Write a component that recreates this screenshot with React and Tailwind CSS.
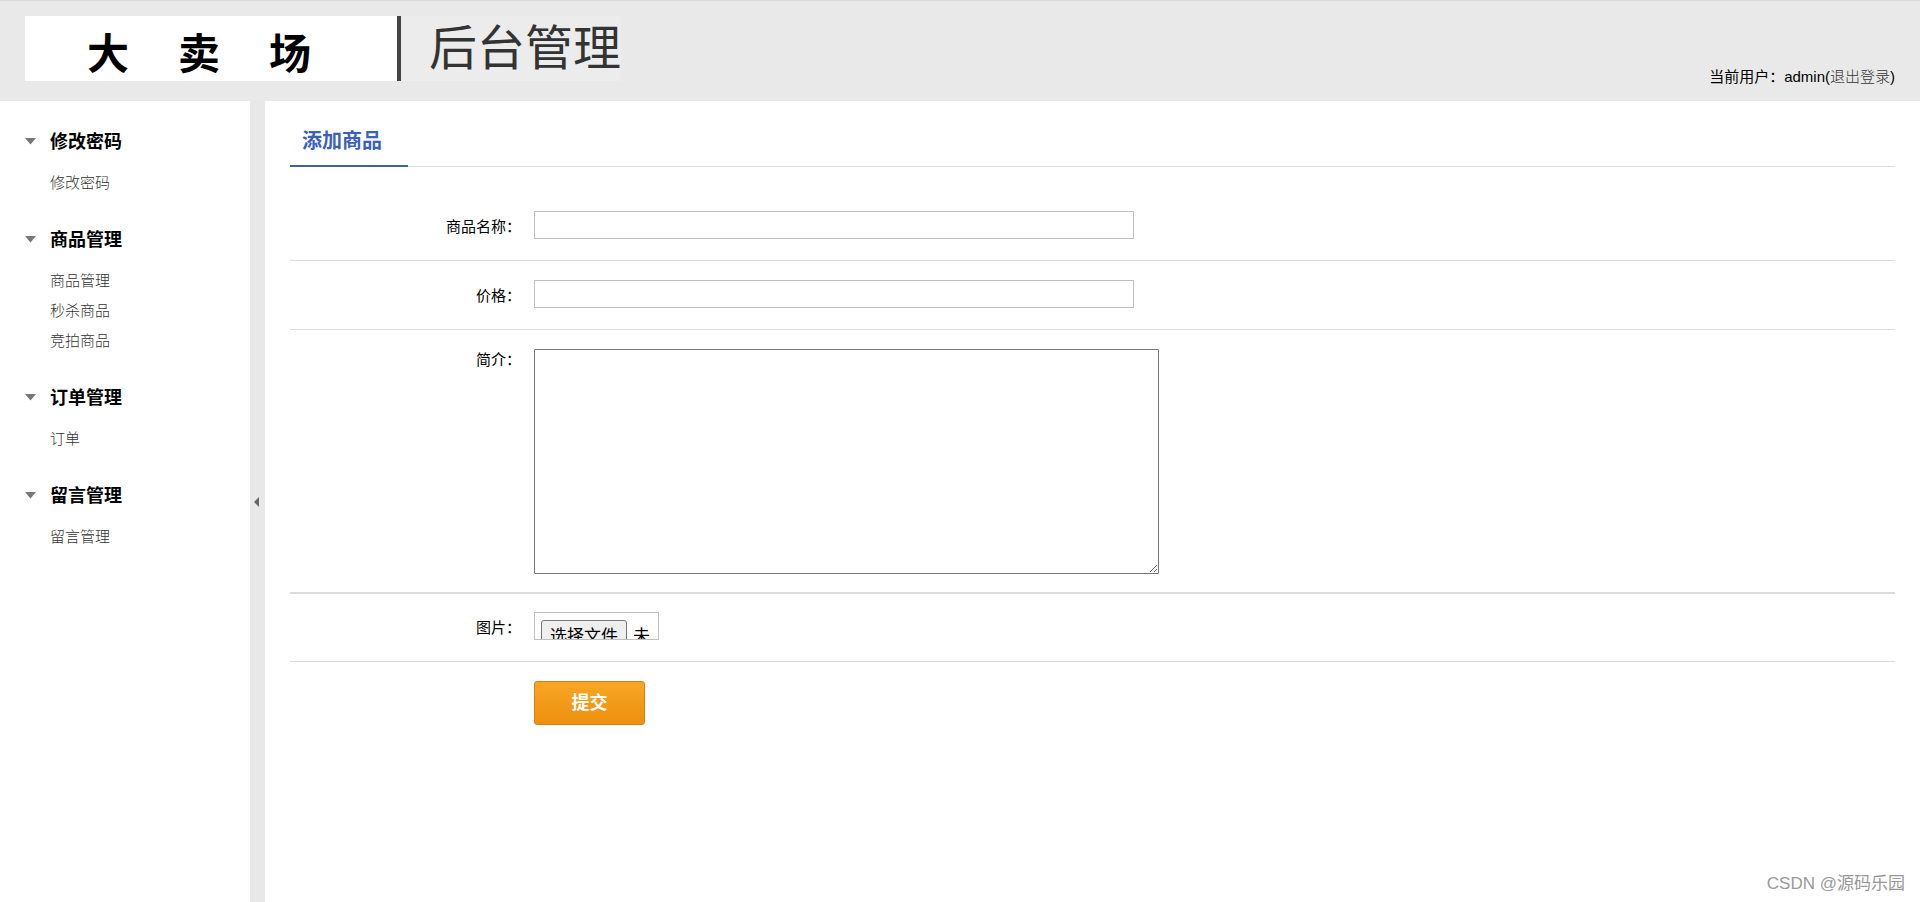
import { useState } from "react";

const MENU = [
  { title: "修改密码", items: ["修改密码"] },
  { title: "商品管理", items: ["商品管理", "秒杀商品", "竞拍商品"] },
  { title: "订单管理", items: ["订单"] },
  { title: "留言管理", items: ["留言管理"] },
];

function Header() {
  return (
    <header className="flex h-[101px] shrink-0 items-start justify-between border-t border-[#dadada] bg-[#e9e9e9] px-[25px] pt-[15px]">
      <div className="flex h-[65px] shrink-0">
        <div className="flex w-[372px] items-center gap-[49px] bg-white pt-3 pl-[62px] text-[42px] leading-none font-bold text-black">
          <span>大</span>
          <span>卖</span>
          <span>场</span>
        </div>
        <div className="border-l-4 border-[#444] bg-[#ececec] pl-7 text-[48px] leading-[66px] text-[#333]">
          后台管理
        </div>
      </div>
      <p className="mt-[46px] text-[15px] leading-[30px] whitespace-nowrap text-black">
        当前用户：admin(
        <a href="#logout" className="font-light text-[#333]">退出登录</a>)
      </p>
    </header>
  );
}

function Sidebar() {
  const [closed, setClosed] = useState([]);

  const toggle = (title) => {
    setClosed(closed.includes(title) ? closed.filter((t) => t !== title) : [...closed, title]);
  };

  return (
    <nav className="w-[250px] shrink-0 bg-white pt-[26px] pl-[25px]">
      {MENU.map((group) => (
        <section key={group.title} className="mb-[27px]">
          <button
            onClick={() => toggle(group.title)}
            className="flex h-[30px] items-center gap-[14px] text-[18px] leading-[30px] font-bold text-black"
          >
            <svg width="11" height="9" viewBox="0 0 11 9" fill="#777">
              <path d="M0 0H11L5.5 6.5Z" />
            </svg>
            {group.title}
          </button>
          {!closed.includes(group.title) && (
            <ul className="mt-[11px] pl-[25px] text-[15px] leading-[30px] font-light text-[#333]">
              {group.items.map((item) => (
                <li key={item}>
                  <a href="#menu">{item}</a>
                </li>
              ))}
            </ul>
          )}
        </section>
      ))}
    </nav>
  );
}

function Row({ label, htmlFor, className = "border-b pt-[19px] pb-[21px]", labelClass = "leading-[32px]", children }) {
  return (
    <div className={`flex items-start border-[#dcdcdc] ${className}`}>
      <div className={`-mb-2 w-[244px] shrink-0 pr-[13px] text-right text-[15px] ${labelClass}`}>
        {label && <label htmlFor={htmlFor}>{label}：</label>}
      </div>
      {children}
    </div>
  );
}

function ProductForm() {
  const inputClass = "h-[28px] w-[600px] border border-[#c0c0c0] bg-white px-2 text-[15px] outline-none";

  return (
    <form onSubmit={(e) => e.preventDefault()} className="pt-[25px]">
      <Row label="商品名称" htmlFor="name">
        <input id="name" type="text" className={inputClass} />
      </Row>
      <Row label="价格" htmlFor="price">
        <input id="price" type="text" className={inputClass} />
      </Row>
      <Row label="简介" htmlFor="intro" className="border-b-2 pt-[19px] pb-[18px]" labelClass="leading-[22px]">
        <textarea
          id="intro"
          className="block h-[225px] w-[625px] resize rounded-[1px] border border-[#767676] bg-white p-1 text-[15px] outline-none"
        />
      </Row>
      <Row label="图片" htmlFor="picture" className="border-b pt-[18px] pb-[21px]">
        <label
          htmlFor="picture"
          className="flex h-[28px] w-[125px] items-start gap-[6px] overflow-hidden border border-[#c0c0c0] bg-white pt-[7px] pl-[6px] text-[17px] leading-[32px] whitespace-nowrap"
        >
          <input id="picture" type="file" className="sr-only" />
          <span className="h-[34px] shrink-0 rounded-[3px] border border-[#767676] bg-[#efefef] px-2">
            选择文件
          </span>
          <span className="shrink-0 pt-px">未</span>
        </label>
      </Row>
      <Row className="pt-[19px]">
        <button
          type="submit"
          className="h-[44px] w-[111px] rounded-[3px] border border-[#d8800f] bg-linear-to-b from-[#f8a623] to-[#ee8f0e] pt-px text-[18px] font-bold text-white"
        >
          提交
        </button>
      </Row>
    </form>
  );
}

export default function App() {
  const [open, setOpen] = useState(true);

  return (
    <div className="relative flex min-h-screen flex-col bg-white font-['Liberation_Sans','Noto_Sans_CJK_SC',sans-serif] text-black">
      <Header />
      <div className="flex flex-1">
        {open && <Sidebar />}
        <button
          aria-label="收起菜单"
          onClick={() => setOpen(!open)}
          className="flex w-[15px] shrink-0 items-center bg-[#e8e8e8] pl-1"
        >
          <svg width="5" height="10" viewBox="0 0 5 10" fill="#666">
            <path d="M5 0V10L0 5Z" />
          </svg>
        </button>
        <main className="min-w-0 flex-1 px-[25px] pt-[11px]">
          <div className="flex h-[55px] items-end border-b border-[#dcdcdc]">
            <h1 className="-mb-px h-[55px] w-[118px] border-b-2 border-[#41629c] pl-3 text-[20px] leading-[58px] font-bold text-[#3a60c0]">
              添加商品
            </h1>
          </div>
          <ProductForm />
        </main>
      </div>
      <div className="absolute right-[15px] bottom-[6px] text-[17px] leading-6 text-[#999]">CSDN @源码乐园</div>
    </div>
  );
}
